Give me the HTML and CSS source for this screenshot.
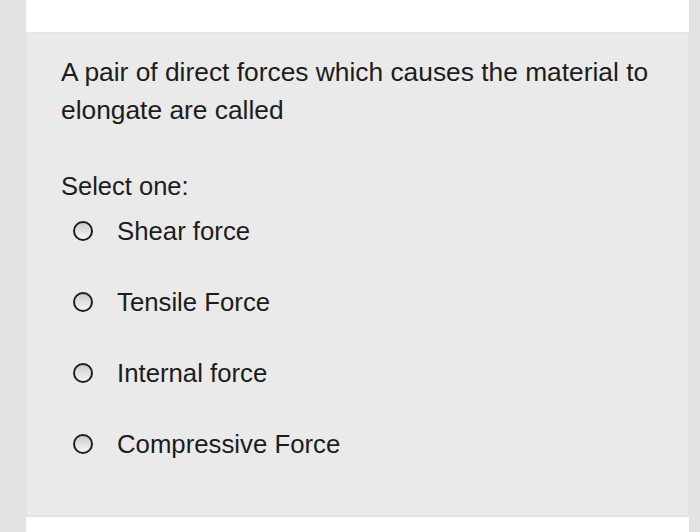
FILE: index.html
```html
<!DOCTYPE html>
<html>
<head>
<meta charset="utf-8">
<link rel="stylesheet" href="styles.css">
</head>
<body>
<div class="page">
  <div class="card-top"></div>
  <div class="question">
    <p class="qtext">A pair of direct forces which causes the material to elongate are called</p>
    <p class="prompt">Select one:</p>
    <div class="options">
      <label class="option"><span class="radio"></span><span class="label">Shear force</span></label>
      <label class="option"><span class="radio"></span><span class="label">Tensile Force</span></label>
      <label class="option"><span class="radio"></span><span class="label">Internal force</span></label>
      <label class="option"><span class="radio"></span><span class="label">Compressive Force</span></label>
    </div>
  </div>
  <div class="card-bottom"></div>
</div>
</body>
</html>
```
FILE: styles.css
```css
html, body {
  margin: 0;
  padding: 0;
  background: #e3e3e3;
  font-family: "Liberation Sans", Arial, sans-serif;
  color: #1c1c1c;
}
.page {
  margin: 0 11px 0 26px;
  height: 532px;
  display: flex;
  flex-direction: column;
}
.card-top {
  height: 32px;
  background: #ffffff;
  border-bottom: 1px solid #e4e4e4;
}
.question {
  flex: 0 0 auto;
  height: 484px;
  background: #eaeaea;
  border-left: 1px solid #e6e6e6;
  border-right: 1px solid #e6e6e6;
  border-bottom: 2px solid #e2e2e2;
  padding: 0 0 0 34px;
  box-sizing: border-box;
}
.card-bottom {
  flex: 1;
  background: #ffffff;
}
.qtext {
  margin: 20px 0 0 0;
  font-size: 26.35px;
  line-height: 38px;
  width: 615px;
}
.prompt {
  margin: 38px 0 0 0;
  font-size: 25.5px;
  line-height: 38px;
}
.options {
  display: flex;
  flex-direction: column;
  gap: 33px;
  margin-top: 7px;
}
.option {
  display: flex;
  align-items: center;
  height: 38px;
}
.radio {
  width: 16px;
  height: 16px;
  border: 2px solid #1e1e1e;
  border-radius: 50%;
  background: linear-gradient(#cccccc, #f6f6f6);
  margin-left: 12px;
  margin-right: 24px;
}
.label {
  font-size: 25.75px;
  line-height: 38px;
}
```
